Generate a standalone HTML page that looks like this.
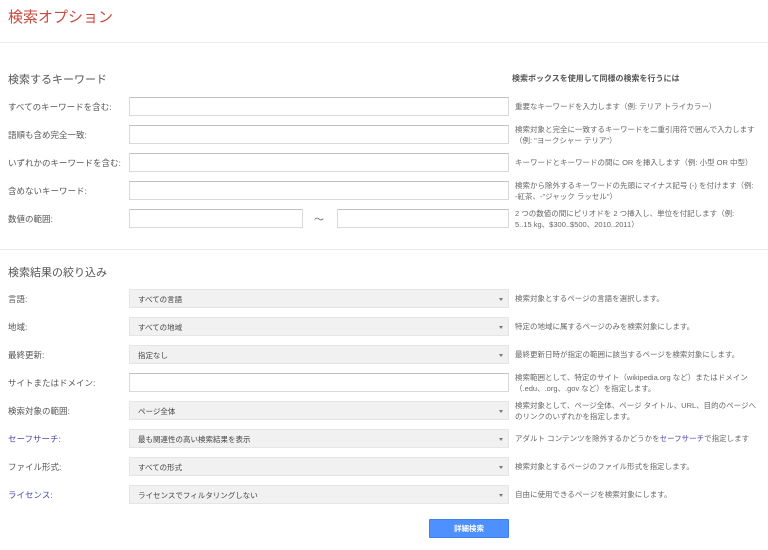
<!DOCTYPE html>
<html><head><meta charset="utf-8"><style>
*{margin:0;padding:0;box-sizing:border-box}
body{width:768px;height:550px;background:#fff;font-family:"Liberation Sans","Noto Sans CJK JP",sans-serif;color:#444;position:relative;overflow:hidden}
.a{position:absolute;white-space:nowrap}
.t{left:8px;top:6px;font-size:15px;color:#c84a40}
.hr{position:absolute;left:0;width:768px;height:1px;background:#ebebeb}
.h{left:8px;font-size:11px;color:#555}
.lb{left:8px;font-size:8.5px;color:#555}
.lk{color:#4a4aa8}
.in{position:absolute;left:129px;width:380px;height:19px;border:1px solid #d9d9d9;border-top-color:#c0c0c0;background:#fff}
.sel{position:absolute;left:129px;width:380px;height:19px;background:#f1f1f1;border:1px solid #e5e5e5;font-size:7.5px;color:#444;padding:4px 0 0 8px}
.sel:after{content:"";position:absolute;right:5px;top:8px;border-left:2.5px solid transparent;border-right:2.5px solid transparent;border-top:3px solid #777}
.d{left:515px;font-size:7.5px;color:#666;line-height:11px}
</style></head><body>
<div class="a t">検索オプション</div>
<div class="hr" style="top:42px"></div>
<div class="a h" style="top:71px">検索するキーワード</div>
<div class="a" style="left:512px;top:73px;font-size:8px;color:#555;font-weight:bold">検索ボックスを使用して同様の検索を行うには</div>

<div class="a lb" style="top:101px">すべてのキーワードを含む:</div><div class="in" style="top:97px"></div>
<div class="a d" style="top:101px">重要なキーワードを入力します（例: テリア トライカラー）</div>
<div class="a lb" style="top:129px">語順も含め完全一致:</div><div class="in" style="top:125px"></div>
<div class="a d" style="top:124px">検索対象と完全に一致するキーワードを二重引用符で囲んで入力します<br>（例: "ヨークシャー テリア"）</div>
<div class="a lb" style="top:157px">いずれかのキーワードを含む:</div><div class="in" style="top:153px"></div>
<div class="a d" style="top:157px">キーワードとキーワードの間に OR を挿入します（例: 小型 OR 中型）</div>
<div class="a lb" style="top:185px">含めないキーワード:</div><div class="in" style="top:181px"></div>
<div class="a d" style="top:180px">検索から除外するキーワードの先頭にマイナス記号 (-) を付けます（例:<br>-紅茶、-"ジャック ラッセル"）</div>
<div class="a lb" style="top:213px">数値の範囲:</div>
<div class="in" style="top:209px;width:174px"></div>
<div class="a" style="left:314px;top:211px;font-size:10px;color:#666">～</div>
<div class="in" style="top:209px;left:337px;width:172px"></div>
<div class="a d" style="top:208px">2 つの数値の間にピリオドを 2 つ挿入し、単位を付記します（例:<br>5..15 kg、$300..$500、2010..2011）</div>

<div class="hr" style="top:249px"></div>
<div class="a h" style="top:264px">検索結果の絞り込み</div>

<div class="a lb" style="top:293px">言語:</div><div class="sel" style="top:289px">すべての言語</div>
<div class="a d" style="top:293px">検索対象とするページの言語を選択します。</div>
<div class="a lb" style="top:321px">地域:</div><div class="sel" style="top:317px">すべての地域</div>
<div class="a d" style="top:321px">特定の地域に属するページのみを検索対象にします。</div>
<div class="a lb" style="top:349px">最終更新:</div><div class="sel" style="top:345px">指定なし</div>
<div class="a d" style="top:349px">最終更新日時が指定の範囲に該当するページを検索対象にします。</div>
<div class="a lb" style="top:377px">サイトまたはドメイン:</div><div class="in" style="top:373px"></div>
<div class="a d" style="top:372px">検索範囲として、特定のサイト（wikipedia.org など）またはドメイン<br>（.edu、.org、.gov など）を指定します。</div>
<div class="a lb" style="top:405px">検索対象の範囲:</div><div class="sel" style="top:401px">ページ全体</div>
<div class="a d" style="top:400px">検索対象として、ページ全体、ページ タイトル、URL、目的のページへ<br>のリンクのいずれかを指定します。</div>
<div class="a lb lk" style="top:433px">セーフサーチ:</div><div class="sel" style="top:429px">最も関連性の高い検索結果を表示</div>
<div class="a d" style="top:433px">アダルト コンテンツを除外するかどうかを<span class="lk">セーフサーチ</span>で指定します</div>
<div class="a lb" style="top:461px">ファイル形式:</div><div class="sel" style="top:457px">すべての形式</div>
<div class="a d" style="top:461px">検索対象とするページのファイル形式を指定します。</div>
<div class="a lb lk" style="top:489px">ライセンス:</div><div class="sel" style="top:485px">ライセンスでフィルタリングしない</div>
<div class="a d" style="top:489px">自由に使用できるページを検索対象にします。</div>

<div class="a" style="left:429px;top:519px;width:80px;height:19px;background:#4d90fe;border:1px solid #3f7fe8;border-radius:1px;color:#fff;font-size:7.5px;font-weight:bold;text-align:center;line-height:17px">詳細検索</div>
</body></html>
